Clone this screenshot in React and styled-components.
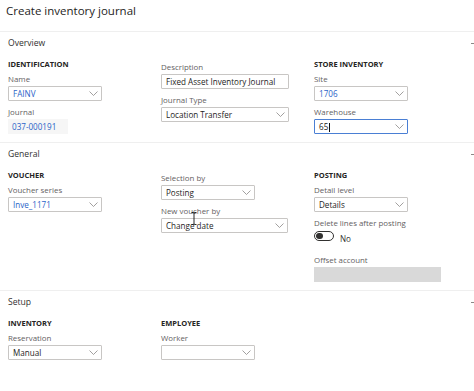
import React from 'react'
import styled, { createGlobalStyle } from 'styled-components'

const GlobalStyle = createGlobalStyle`
  body {
    margin: 0;
    background: #fff;
    font-family: 'Segoe UI', 'Open Sans', sans-serif;
    color: #323130;
  }
`

const Page = styled.div`
  width: 474px;
  overflow: hidden;
`

const TitleBar = styled.header`
  height: 32px;
  padding: 0 6px;
  box-sizing: border-box;
  border-bottom: 1px solid #efefef;
`

const Title = styled.h1`
  margin: 0;
  font-size: 11.5px;
  font-weight: 400;
  line-height: 22px;
  color: #252423;
`

const Section = styled.section`
  padding: 4px 0 8px 8px;
  & + & {
    border-top: 1px solid #efefef;
  }
`

const SectionHeader = styled.div`
  display: flex;
  justify-content: space-between;
  align-items: center;
  height: 14px;
  margin-bottom: 8px;
`

const Heading = styled.h2`
  margin: 0;
  font-size: 8.6px;
  font-weight: 400;
  line-height: 14px;
  color: #323130;
`

const CollapseMark = styled.span`
  width: 3px;
  height: 1px;
  background: #8a8886;
`

const Columns = styled.div`
  display: grid;
  grid-template-columns: 153px 153px 153px;
`

const Column = styled.div`
  padding-top: ${p => (p.$plain ? '3px' : '0')};
`

const GroupTitle = styled.div`
  font-size: 7.5px;
  font-weight: 700;
  line-height: 12px;
  color: #252423;
  margin-bottom: 3px;
`

const Field = styled.div`
  position: relative;
  & + & {
    margin-top: 5px;
  }
`

const Label = styled.div`
  font-size: 7.9px;
  line-height: 12px;
  color: #64615f;
`

const Control = styled.div`
  box-sizing: border-box;
  margin-top: 1px;
  width: ${p => p.$width || 94}px;
  height: 15px;
  display: flex;
  align-items: center;
  justify-content: space-between;
  padding: 0 3px 0 4px;
  border: 1px solid ${p => (p.$focused ? '#4a7fd4' : '#c8c6c4')};
  border-radius: 1px;
  background: #fff;
  font-size: 8.1px;
  color: ${p => (p.$link ? '#2a63c8' : '#252423')};
  white-space: nowrap;
`

const ReadOnly = styled.div`
  box-sizing: border-box;
  margin-top: 1px;
  width: ${p => p.$width || 60}px;
  height: 15px;
  display: flex;
  align-items: center;
  padding: 0 4px;
  background: ${p => (p.$disabled ? '#d9d9d9' : '#f6f6f6')};
  font-size: 8.1px;
  color: #2a63c8;
`

const Caret = styled.span`
  display: inline-block;
  width: 1px;
  height: 9px;
  margin-left: 0.5px;
  background: #111;
  vertical-align: middle;
`

const ToggleRow = styled.div`
  display: flex;
  align-items: flex-start;
  gap: 6px;
  height: 20px;
  margin-top: 1px;
  & + ${Field} {
    margin-top: 4px;
  }
`

const Switch = styled.span`
  box-sizing: border-box;
  margin-top: 1px;
  width: 20px;
  height: 10px;
  border: 1.2px solid #323130;
  border-radius: 5px;
  padding: 0 1px;
  display: flex;
  align-items: center;
  &::before {
    content: '';
    width: 6.5px;
    height: 6.5px;
    border-radius: 50%;
    background: #323130;
  }
`

const ToggleText = styled.span`
  margin-top: 3px;
  font-size: 8.1px;
  line-height: 12px;
  color: #323130;
`

const Pointer = styled.svg`
  position: absolute;
  left: 30px;
  top: 7px;
`

const Chevron = () => (
  <svg width="9" height="5" viewBox="0 0 9 5">
    <polyline points="0.5,0.5 4.5,4.5 8.5,0.5" fill="none" stroke="#8a8886" strokeWidth="0.8" />
  </svg>
)

function Select({ label, value, width, link, focused, caret, children }) {
  return (
    <Field>
      <Label>{label}</Label>
      <Control $width={width} $link={link} $focused={focused}>
        <span>
          {value}
          {caret && <Caret />}
        </span>
        <Chevron />
      </Control>
      {children}
    </Field>
  )
}

function TextField({ label, value, width }) {
  return (
    <Field>
      <Label>{label}</Label>
      <Control $width={width}>
        <span>{value}</span>
      </Control>
    </Field>
  )
}

function Block({ title, children }) {
  return (
    <Section>
      <SectionHeader>
        <Heading>{title}</Heading>
        <CollapseMark />
      </SectionHeader>
      <Columns>{children}</Columns>
    </Section>
  )
}

export default function App() {
  return (
    <Page>
      <GlobalStyle />
      <TitleBar>
        <Title>Create inventory journal</Title>
      </TitleBar>

      <Block title="Overview">
        <Column>
          <GroupTitle>IDENTIFICATION</GroupTitle>
          <Select label="Name" value="FAINV" link />
          <Field>
            <Label>Journal</Label>
            <ReadOnly>037-000191</ReadOnly>
          </Field>
        </Column>
        <Column $plain>
          <TextField label="Description" value="Fixed Asset Inventory Journal" width={128} />
          <Select label="Journal Type" value="Location Transfer" width={128} />
        </Column>
        <Column>
          <GroupTitle>STORE INVENTORY</GroupTitle>
          <Select label="Site" value="1706" link />
          <Select label="Warehouse" value="65" focused caret />
        </Column>
      </Block>

      <Block title="General">
        <Column>
          <GroupTitle>VOUCHER</GroupTitle>
          <Select label="Voucher series" value="Inve_1171" link />
        </Column>
        <Column $plain>
          <Select label="Selection by" value="Posting" />
          <Select label="New voucher by" value="Change date" width={127}>
            <Pointer width="6" height="13" viewBox="0 0 6 13">
              <path
                d="M0.5 0.5h2l0.5 0.6 0.5-0.6h2M3 1v11M0.5 12.5h2l0.5-0.6 0.5 0.6h2"
                fill="none"
                stroke="#111"
                strokeWidth="0.9"
              />
            </Pointer>
          </Select>
        </Column>
        <Column>
          <GroupTitle>POSTING</GroupTitle>
          <Select label="Detail level" value="Details" />
          <Field>
            <Label>Delete lines after posting</Label>
          </Field>
          <ToggleRow>
            <Switch />
            <ToggleText>No</ToggleText>
          </ToggleRow>
          <Field>
            <Label>Offset account</Label>
            <ReadOnly $disabled $width={127} />
          </Field>
        </Column>
      </Block>

      <Block title="Setup">
        <Column>
          <GroupTitle>INVENTORY</GroupTitle>
          <Select label="Reservation" value="Manual" />
        </Column>
        <Column>
          <GroupTitle>EMPLOYEE</GroupTitle>
          <Select label="Worker" value="" />
        </Column>
        <Column />
      </Block>
    </Page>
  )
}
